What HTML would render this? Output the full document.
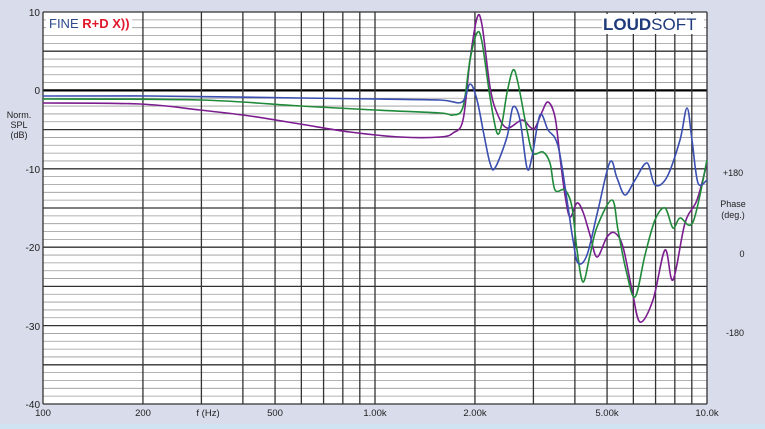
<!DOCTYPE html>
<html><head><meta charset="utf-8"><style>
html,body{margin:0;padding:0;background:#d9dcea;width:765px;height:429px;overflow:hidden}
svg{display:block;font-family:"Liberation Sans",sans-serif}
</style></head><body>
<svg width="765" height="429" viewBox="0 0 765 429" xmlns="http://www.w3.org/2000/svg">
<rect x="0" y="0" width="765" height="429" fill="#d9dcea"/>
<rect x="0" y="424" width="765" height="5" fill="#cfe3f3"/>
<rect x="43" y="12" width="664" height="392" fill="#fff"/>
<g id="g"></g>
<text x="40" y="16" font-size="10" text-anchor="end" fill="#222">10</text>
<text x="40" y="94" font-size="10" text-anchor="end" fill="#222">0</text>
<text x="40" y="173" font-size="10" text-anchor="end" fill="#222">-10</text>
<text x="40" y="251" font-size="10" text-anchor="end" fill="#222">-20</text>
<text x="40" y="330" font-size="10" text-anchor="end" fill="#222">-30</text>
<text x="40" y="408" font-size="10" text-anchor="end" fill="#222">-40</text>
<text x="19" y="118" font-size="9" text-anchor="middle" fill="#222">Norm.</text>
<text x="19" y="128" font-size="9" text-anchor="middle" fill="#222">SPL</text>
<text x="19" y="138" font-size="9" text-anchor="middle" fill="#222">(dB)</text>
<text x="733" y="176" font-size="9" text-anchor="middle" fill="#222">+180</text>
<text x="733" y="207" font-size="9" text-anchor="middle" fill="#222">Phase</text>
<text x="733" y="218" font-size="9" text-anchor="middle" fill="#222">(deg.)</text>
<text x="742" y="257" font-size="9" text-anchor="middle" fill="#222">0</text>
<text x="735" y="336" font-size="9" text-anchor="middle" fill="#222">-180</text>
<g font-size="9.5" fill="#222" text-anchor="middle">
<text x="43" y="416">100</text><text x="143" y="416">200</text><text x="208" y="416">f (Hz)</text>
<text x="275" y="416">500</text><text x="375" y="416">1.00k</text><text x="475" y="416">2.00k</text>
<text x="607" y="416">5.00k</text><text x="707" y="416">10.0k</text></g>
<rect x="46" y="15" width="86" height="17" fill="#fff"/>
<text x="49" y="28" font-size="13" fill="#2d4a8a">FINE <tspan fill="#e0182c" font-weight="bold">R+D X))</tspan></text>
<rect x="602" y="14" width="102" height="20" fill="#fff"/>
<text x="603" y="30" font-size="17" fill="#1f3a7a"><tspan font-weight="bold">LOUD</tspan>SOFT</text>
<g id="c" fill="none" stroke-width="1.6" stroke-linejoin="round"></g>
</svg>
<script>
var g=document.getElementById('g'),h='';
for(var i=0;i<=50;i++){var y=12+i*7.84;var c=i%5==0?'#333':'#999',w=i%5==0?1.3:0.8;if(i==10){c='#000';w=2.2;}
h+='<line x1="43" x2="707" y1="'+y+'" y2="'+y+'" stroke="'+c+'" stroke-width="'+w+'"/>';}
var f=[100,200,300,400,500,600,700,800,900,1000,2000,3000,4000,5000,6000,7000,8000,9000,10000];
f.forEach(function(v){var x=43+332*Math.log10(v/100);h+='<line x1="'+x+'" x2="'+x+'" y1="12" y2="404" stroke="#333" stroke-width="1.3"/>';});
g.innerHTML=h;
function cr(s){var p=s.trim().split(/\s+/).map(function(t){return t.split(',').map(Number)});var d='M'+p[0];
for(var i=0;i<p.length-1;i++){var a=p[i-1]||p[i],b=p[i],c=p[i+1],e=p[i+2]||c;
d+=' C'+(b[0]+(c[0]-a[0])/6)+','+(b[1]+(c[1]-a[1])/6)+' '+(c[0]-(e[0]-b[0])/6)+','+(c[1]-(e[1]-b[1])/6)+' '+c[0]+','+c[1];}return d;}
var P="43,103 140,104 200,110 250,116 300,124 350,132 400,137 440,137 453,133 463,120 470,60 477,18 482,25 490,87 497,113 507,128 522,120 530,127 535,128 542,112 548,102 555,117 560,157 565,195 570,217 577,203 583,212 590,235 597,257 607,237 615,233 623,247 632,290 640,322 653,300 665,250 673,280 685,223 697,200 707,163";
var G="43,99 200,100 300,106 375,110 440,113 453,115 463,107 470,60 477,33 482,42 490,97 497,133 502,123 507,93 513,70 518,83 527,130 533,153 543,152 550,163 555,190 565,190 572,207 577,250 583,282 590,255 597,227 612,200 618,230 626,270 635,297 645,255 655,220 665,208 673,228 680,218 693,222 707,160";
var B="43,96 150,96 300,98 375,99 440,100 462,102 470,84 477,100 484,135 490,163 495,168 507,137 513,107 520,120 527,168 532,157 540,115 548,130 555,138 560,155 567,200 573,240 578,263 587,255 598,210 610,162 617,178 625,195 635,180 647,163 655,185 667,177 680,140 687,108 692,140 698,183 707,180";
document.getElementById('c').innerHTML='<path stroke="#7b1d8f" d="'+cr(P)+'"/><path stroke="#1f8a3a" d="'+cr(G)+'"/><path stroke="#3a4fb0" d="'+cr(B)+'"/>';
</script>
</body></html>
